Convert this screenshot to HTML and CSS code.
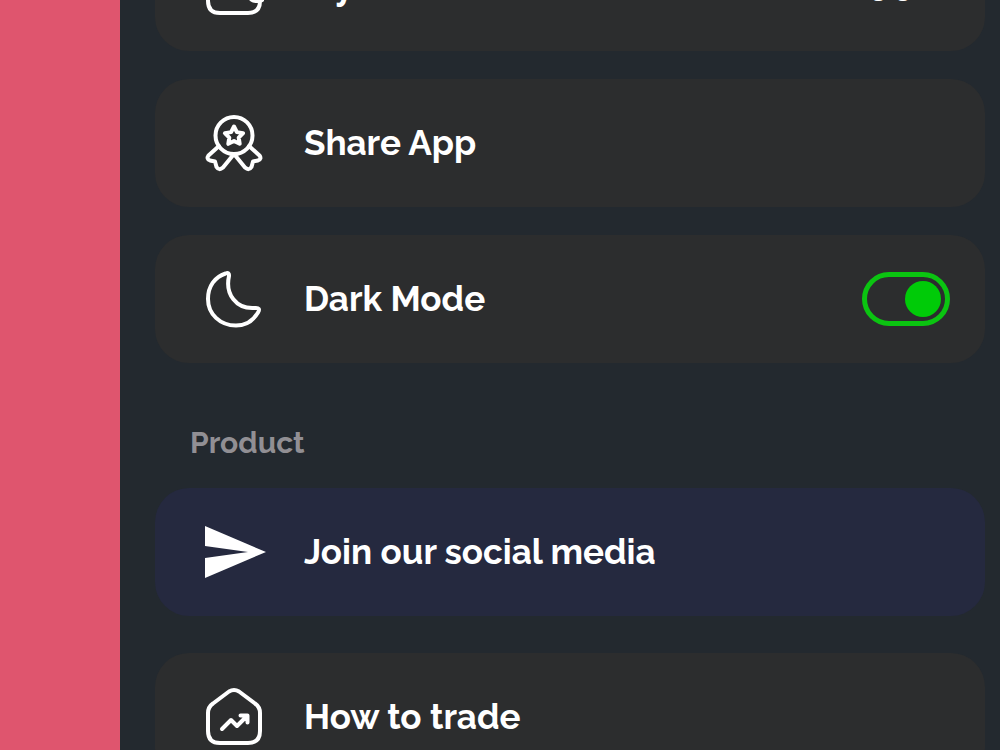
FILE: index.html
```
<!DOCTYPE html>
<html lang="en">
<head>
  <meta charset="utf-8">
  <meta name="viewport" content="width=device-width, initial-scale=1">
  <title>Settings</title>
  <link rel="stylesheet" href="styles.css">
</head>
<body>

  <div class="side"></div>

  <main class="settings">
    <!-- General options -->
    <button type="button" class="row">
      <svg class="icon" viewBox="0 0 64 64">
        <path class="line" d="M16 14h32q10 0 10 10v22q0 12-12 12H18Q6 58 6 46V20"/>
        <path class="solid" d="M62 40V46Q60 48 54 48 46 48 44 38q1-7 8-7h10z"/>
      </svg>
      <span class="label">My Balance</span>
      <span class="value">00</span>
    </button>

    <button type="button" class="row">
      <svg class="icon" viewBox="0 0 64 64">
        <circle class="line" cx="32" cy="24.500" r="18.500"/>
        <path class="line" d="M32 15.500l2.900 5.600 6.200 1-4.400 4.500 1 6.200-5.700-2.800-5.700 2.800 1-6.200-4.400-4.500 6.200-1z"/>
        <path class="line" d="M17 35L6.500 44.500Q4 48 8 49.500L13 50.500 14.500 56Q17 60 21 56.500L32 43"/>
        <path class="line" d="M47 35L57.500 44.500Q60 48 56 49.500L51 50.500 49.500 56Q47 60 43 56.500L32 43"/>
      </svg>
      <span class="label">Share App</span>
    </button>

    <label class="row">
      <svg class="icon" viewBox="0 0 64 64">
        <path class="line" d="M23.500 6.500Q27.500 5 27 9C23 27 34 42.500 53 41Q59 40.500 56 45.500C51 54 43 58.500 34 58.500C18 58.500 6 47 6 32C6 19 13 10 23.500 6.500z"/>
      </svg>
      <span class="label">Dark Mode</span>
      <input type="checkbox" class="toggle" checked>
    </label>

    <!-- Product options -->
    <h2 class="heading">Product</h2>

    <div class="group">
      <button type="button" class="row row-social">
        <svg class="icon" viewBox="0 0 64 64">
          <path class="solid" d="M3 6L64 32 3 58V38L46 32 3 26z"/>
        </svg>
        <span class="label">Join our social media</span>
      </button>

      <button type="button" class="row">
        <svg class="icon" viewBox="0 0 64 64">
          <path class="line" d="M27 6.500Q32 3.500 37 6.500L53 18.500Q58 22 58 28V46Q58 58 46 58H18Q6 58 6 46V28Q6 22 11 18.500z"/>
          <path class="line" d="M20 44L29 35 35 41 44 32M38.500 30.500H45.500V37.500"/>
        </svg>
        <span class="label">How to trade</span>
      </button>
    </div>
  </main>

</body>
</html>
```

FILE: styles.css
```
* {
  box-sizing: border-box;
}
body {
  margin: 0;
  display: flex;
  height: 100vh;
  overflow: hidden;
  background: #23292f;
  color: #fff;
  font-family: Raleway, Lato, sans-serif;
}
/* Coloured strip on the left */
.side {
  flex: 0 0 120px;
  background: #df556e;
}
/* The list starts part way through its first row */
.settings {
  flex: 1;
  display: flex;
  flex-direction: column;
  gap: 28px;
  margin-top: -77px;
  padding: 0 15px 0 35px;
}
.row {
  display: flex;
  flex-shrink: 0;
  align-items: center;
  gap: 38px;
  width: 100%;
  min-height: 128px;
  padding: 0 35px 0 47px;
  border: 0;
  border-radius: 34px;
  background: #2c2d2e;
  color: inherit;
  font: inherit;
  font-size: 35px;
  font-weight: 700;
  line-height: 44px;
  text-align: left;
  cursor: pointer;
}
.row-social {
  background: #25293f;
}
.label {
  flex: 1;
}
.value {
  padding-right: 35px;
  font-size: 40px;
}
/* Icons */
.icon {
  flex: none;
  width: 64px;
  height: 64px;
}
.line {
  fill: none;
  stroke: #fff;
  stroke-width: 4;
  stroke-linecap: round;
  stroke-linejoin: round;
}
.solid {
  fill: #fff;
}
/* Switch */
.toggle {
  appearance: none;
  display: flex;
  align-items: center;
  width: 88px;
  height: 54px;
  margin: 0;
  padding: 0 4px;
  border: 5px solid #0bc411;
  border-radius: 27px;
  cursor: pointer;
}
.toggle::before {
  content: "";
  width: 36px;
  height: 36px;
  border-radius: 50%;
  background: #00cb08;
}
.toggle:checked {
  justify-content: flex-end;
}
/* Section heading */
.heading {
  margin: 34px 0 0;
  padding-left: 35px;
  color: #918f94;
  font-size: 30px;
  line-height: 35px;
}
.group {
  display: flex;
  flex-direction: column;
  gap: 37px;
}
```
